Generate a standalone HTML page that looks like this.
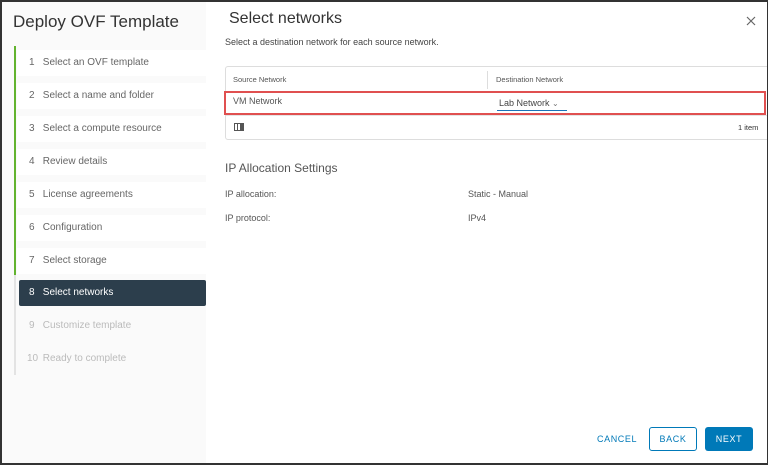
<!DOCTYPE html>
<html><head><style>
*{margin:0;padding:0;box-sizing:border-box}
body{width:768px;height:465px;overflow:hidden;font-family:"Liberation Sans",sans-serif;background:#fff;position:relative}
.frame{position:absolute;left:0;top:0;width:768px;height:465px;border:2px solid #333;border-right-width:1px;border-bottom-width:2px;z-index:9;pointer-events:none}
.left{position:absolute;left:0;top:0;width:206px;height:465px;background:#fafafa}
.t{position:absolute;font-size:17px;color:#333;white-space:nowrap}
.step{position:absolute;left:17px;width:189px;height:26px;background:#fff;font-size:10px;color:#666;line-height:26px;padding-left:12px}
.step span{display:inline-block;width:11px}
.step.dis{background:transparent;color:#bbb}
.step.act{left:19px;width:187px;background:#2c3e4c;color:#fff;border-radius:2px;padding-left:10px}
.s{position:absolute;font-size:9px;color:#444;white-space:nowrap}
</style></head><body>
<div class="left">
<div class="t" style="left:13px;top:12px">Deploy OVF Template</div>
<div style="position:absolute;left:14px;top:46px;width:2px;height:229px;background:#62b32e"></div>
<div style="position:absolute;left:14px;top:275px;width:2px;height:100px;background:#e3e3e3"></div>
<div class="step" style="top:50px"><span>1</span> Select an OVF template</div>
<div class="step" style="top:83px"><span>2</span> Select a name and folder</div>
<div class="step" style="top:116px"><span>3</span> Select a compute resource</div>
<div class="step" style="top:149px"><span>4</span> Review details</div>
<div class="step" style="top:182px"><span>5</span> License agreements</div>
<div class="step" style="top:215px"><span>6</span> Configuration</div>
<div class="step" style="top:248px"><span>7</span> Select storage</div>
<div class="step act" style="top:280px"><span>8</span> Select networks</div>
<div class="step dis" style="top:313px"><span>9</span> Customize template</div>
<div class="step dis" style="top:346px;padding-left:10px"><span style="width:13px">10</span> Ready to complete</div>
</div>
<div class="t" style="left:229px;top:10px;font-size:16px">Select networks</div>
<svg style="position:absolute;left:746px;top:16px" width="10" height="10"><path d="M1 1L9 9M9 1L1 9" stroke="#666" stroke-width="1.2"/></svg>
<div class="s" style="left:225px;top:37px">Select a destination network for each source network.</div>
<div style="position:absolute;left:225px;top:66px;width:545px;height:74px;border:1px solid #ddd;border-radius:3px"></div>
<div style="position:absolute;left:487px;top:71px;width:1px;height:18px;background:#ddd"></div>
<div style="position:absolute;left:226px;top:115px;width:542px;height:1px;background:#e5e5e5"></div>
<div class="s" style="left:233px;top:75px;font-size:7.5px;color:#555">Source Network</div>
<div class="s" style="left:496px;top:75px;font-size:7.5px;color:#555">Destination Network</div>
<div style="position:absolute;left:224px;top:91px;width:542px;height:24px;border:2px solid #e05050"></div>
<div class="s" style="left:233px;top:96px;color:#555">VM Network</div>
<div class="s" style="left:499px;top:98px;color:#444">Lab Network <span style="font-size:8px;color:#777">⌄</span></div>
<div style="position:absolute;left:497px;top:110px;width:70px;height:1px;background:#1a73b8"></div>
<svg style="position:absolute;left:234px;top:123px" width="10" height="8"><rect x="0.5" y="0.5" width="9" height="7" fill="none" stroke="#555"/><rect x="6" y="1" width="3" height="6" fill="#555"/><line x1="3.5" y1="1" x2="3.5" y2="7" stroke="#555"/></svg>
<div class="s" style="left:738px;top:123px;font-size:7.5px;color:#333">1 item</div>
<div class="s" style="left:225px;top:161px;font-size:12px;color:#555">IP Allocation Settings</div>
<div class="s" style="left:225px;top:189px;color:#555">IP allocation:</div>
<div class="s" style="left:468px;top:189px;color:#555">Static - Manual</div>
<div class="s" style="left:225px;top:213px;color:#555">IP protocol:</div>
<div class="s" style="left:468px;top:213px;color:#555">IPv4</div>
<div class="s" style="left:597px;top:434px;color:#0079b8;font-size:9px;letter-spacing:.6px">CANCEL</div>
<div style="position:absolute;left:649px;top:427px;width:48px;height:24px;border:1px solid #0079b8;border-radius:3px;color:#0079b8;font-size:9px;letter-spacing:.6px;text-align:center;line-height:22px">BACK</div>
<div style="position:absolute;left:705px;top:427px;width:48px;height:24px;background:#0079b8;border-radius:3px;color:#fff;font-size:9px;letter-spacing:.6px;text-align:center;line-height:24px">NEXT</div>
<div class="frame"></div>
</body></html>
